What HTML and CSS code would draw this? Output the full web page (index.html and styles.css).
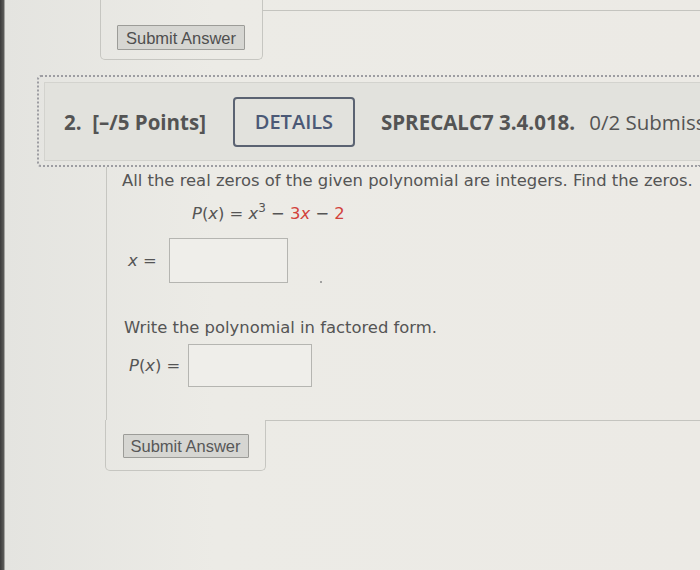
FILE: index.html
```html
<!DOCTYPE html>
<html>
<head>
<meta charset="utf-8">
<link rel="stylesheet" href="styles.css">
</head>
<body>
<div class="screen">
  <div class="edge"></div>
  <div class="page">
    <div class="tab-row top">
      <div class="tab tab-top">
        <button class="submit">Submit Answer</button>
      </div>
      <div class="tab-rest tab-rest-top"></div>
    </div>

    <div class="question">
      <div class="q-header">
        <span class="q-num">2.&nbsp; [–/5 Points]</span>
        <span class="details">DETAILS</span>
        <span class="q-code">SPRECALC7 3.4.018.</span>
        <span class="q-subs">0/2 Submissions Used</span>
      </div>
    </div>

    <div class="body">
      <div class="content">
        <p class="prompt">All the real zeros of the given polynomial are integers. Find the zeros.</p>
        <p class="equation"><i>P</i>(<i>x</i>) = <i>x</i><sup>3</sup> − <span class="red">3<i>x</i></span> − <span class="red">2</span></p>
        <div class="answer-row row1">
          <span class="label"><i>x</i> =</span>
          <span class="input in1"></span>
          <span class="dot"></span>
        </div>
        <p class="prompt second">Write the polynomial in factored form.</p>
        <div class="answer-row row2">
          <span class="label"><i>P</i>(<i>x</i>) =</span>
          <span class="input in2"></span>
        </div>
      </div>
      <div class="tab-row bottom">
        <div class="tab tab-bottom">
          <button class="submit">Submit Answer</button>
        </div>
        <div class="tab-rest tab-rest-bottom"></div>
      </div>
    </div>
  </div>
</div>
</body>
</html>
```

FILE: styles.css
```css
html, body {
  margin: 0;
  padding: 0;
}
body {
  width: 700px;
  height: 570px;
  overflow: hidden;
  background: #eae9e4;
}
.screen {
  display: flex;
  height: 570px;
}
.edge {
  width: 5px;
  flex: none;
  background: linear-gradient(to right, #3b3b3b, #5a5a58 70%, #c8c8c4);
}
.page {
  flex: 1;
  display: flex;
  flex-direction: column;
  min-width: 0;
  background: linear-gradient(to right, #e4e4e0, #ecebe6 30%, #eceae5);
}

/* tab shapes */
.tab-row {
  display: flex;
}
.tab {
  flex: none;
  border: 1.5px solid #c6c6c1;
  border-top: none;
  border-radius: 0 0 5px 5px;
  box-sizing: border-box;
  display: flex;
  align-items: flex-start;
}
.tab-rest {
  flex: 1;
  border-top: 1.5px solid #c4c4bf;
}
.tab-top {
  margin-left: 95px;
  width: 163px;
  height: 60px;
  padding: 25px 0 0 16px;
}
.tab-rest-top {
  margin-top: 10px;
  margin-left: -1px;
}
.tab-bottom {
  width: 161px;
  height: 51px;
  padding: 14px 0 0 17px;
  margin-left: -1.5px;
}
.tab-rest-bottom {
  margin-left: -1px;
}

.submit {
  font-family: "Liberation Sans", Arial, sans-serif;
  font-size: 16.5px;
  color: #4f4f4f;
  background: #d6d6d2;
  border: 1.5px solid #9c9c98;
  border-radius: 1px;
  height: 25px;
  padding: 0 8px;
  line-height: 22px;
  margin: 0;
}
.tab-bottom .submit {
  height: 24px;
  padding: 0 7px;
  color: #585858;
}

/* question header */
.question {
  margin-top: 15px;
  margin-left: 32px;
  border: 2px dotted #9d9da2;
  border-right: none;
  border-radius: 4px 0 0 4px;
  padding: 5px 0 4px 5px;
}
.q-header {
  background: #e2e2dd;
  border: 1px solid #d3d3ce;
  border-right: none;
  height: 77px;
  display: flex;
  align-items: center;
  padding-left: 19px;
  white-space: nowrap;
  overflow: hidden;
  font-family: "Open Sans", "Noto Sans", sans-serif;
  font-size: 20.5px;
  color: #545454;
}
.q-header > span {
  flex: none;
}
.q-num {
  font-weight: 700;
}
.details {
  margin-left: 27px;
  border: 2px solid #5b6372;
  border-radius: 4px;
  width: 122px;
  height: 50px;
  box-sizing: border-box;
  display: flex;
  align-items: center;
  justify-content: center;
  color: #4b5976;
  font-weight: 600;
  font-size: 20px;
}
.q-code {
  margin-left: 26px;
  font-weight: 700;
}
.q-subs {
  margin-left: 14px;
}

/* body */
.body {
  margin-left: 101px;
  display: flex;
  flex-direction: column;
}
.content {
  border-left: 1.5px solid #c6c6c1;
  height: 253px;
  padding-left: 15px;
  font-family: "DejaVu Sans", Verdana, sans-serif;
  color: #555;
  font-size: 16.4px;
}
.prompt {
  margin: 4px 0 0 0;
  line-height: 20px;
  white-space: nowrap;
}
.equation {
  margin: 13px 0 0 70px;
  line-height: 20px;
  white-space: nowrap;
}
.equation sup {
  font-size: 12px;
  vertical-align: 7px;
  line-height: 0;
}
.red {
  color: #d2423c;
}
.answer-row {
  display: flex;
  align-items: center;
}
.row1 {
  margin-top: 14px;
  padding-left: 6px;
}
.row2 {
  margin-top: 6px;
  padding-left: 7px;
}
.label {
  white-space: nowrap;
}
.input {
  display: block;
  background: #efeeea;
  border: 1.5px solid #b5b5b1;
  box-sizing: border-box;
}
.in1 {
  width: 119px;
  height: 45px;
  margin-left: 12px;
}
.in2 {
  width: 124px;
  height: 43px;
  margin-left: 8px;
}
.dot {
  width: 2px;
  height: 2px;
  border-radius: 1px;
  background: #888;
  margin-left: 32px;
  align-self: flex-end;
}
.second {
  margin-top: 35px;
  padding-left: 2px;
}
```
